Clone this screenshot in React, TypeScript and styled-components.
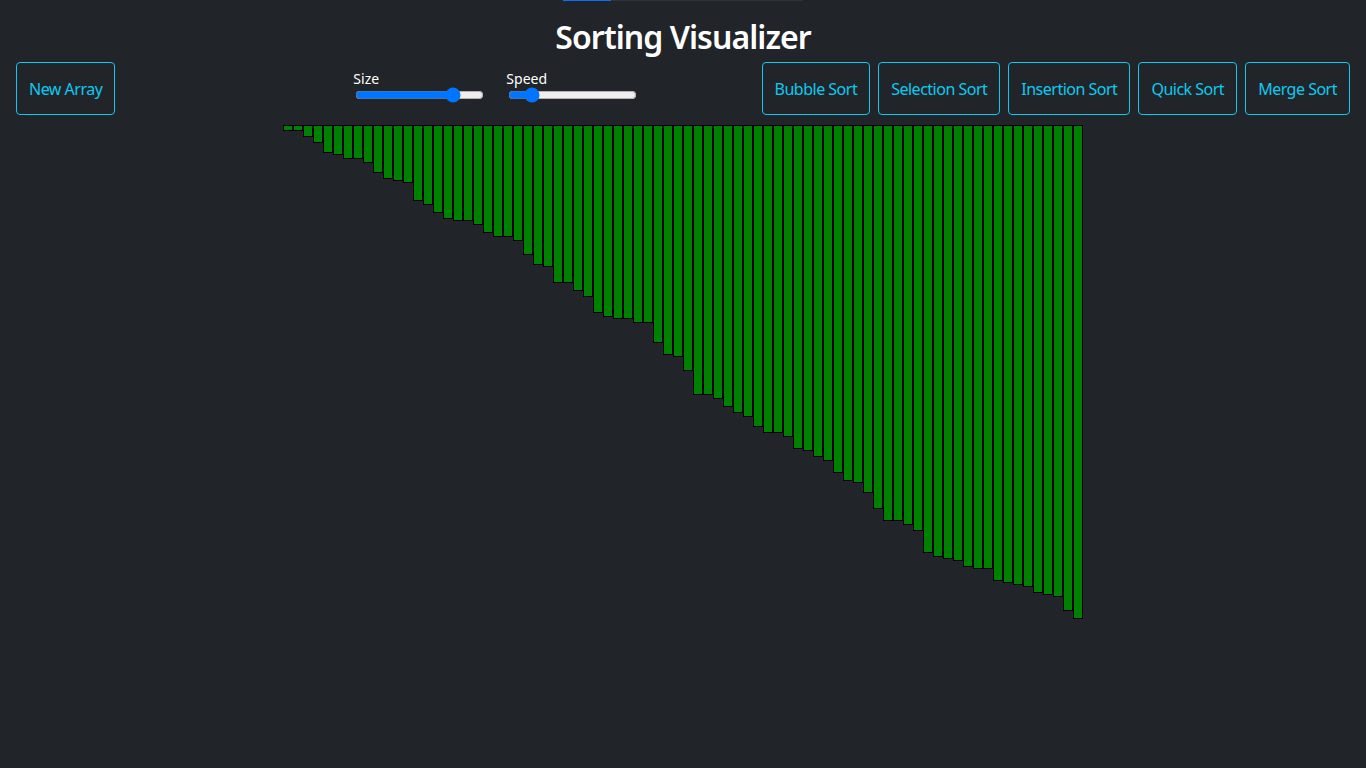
import React, { useState } from "react";
import styled, { createGlobalStyle } from "styled-components";

const GlobalStyle = createGlobalStyle`
  html, body {
    margin: 0;
    padding: 0;
    background: #212529;
    color: #ffffff;
    font-family: "Noto Sans", "Open Sans", "DejaVu Sans", sans-serif;
  }
  * { box-sizing: border-box; }
`;

const Page = styled.div`
  min-height: 768px;
  background: #212529;
  display: flex;
  flex-direction: column;
  align-items: stretch;
`;

const ProgressTrack = styled.div`
  align-self: center;
  width: 240px;
  height: 1px;
  background: #2f3338;
  display: flex;
`;

const ProgressFill = styled.div`
  height: 100%;
  background: #0d6efd;
`;

const Title = styled.h2`
  margin: 17px 0 0;
  text-align: center;
  font-size: 32px;
  font-weight: 600;
  letter-spacing: -0.95px;
  line-height: 38px;
  color: #ffffff;
`;

const Toolbar = styled.div`
  display: flex;
  align-items: stretch;
  justify-content: space-between;
  padding: 0 16px;
  margin-top: 6px;
  height: 53px;
`;

const LeftGroup = styled.div`
  display: flex;
  align-items: stretch;
`;

const SliderArea = styled.div`
  display: flex;
  gap: 20px;
  margin-left: 238px;
  padding-top: 9px;
`;

const SliderField = styled.label`
  display: flex;
  flex-direction: column;
  font-size: 14px;
  line-height: 16px;
  color: #ffffff;
`;

const Range = styled.input`
  width: 129px;
  margin: 0 2px;
  accent-color: #0075ff;
`;

const ButtonRow = styled.div`
  display: flex;
  gap: 8px;
  align-items: stretch;
`;

const OutlineButton = styled.button`
  font-family: inherit;
  font-size: 16px;
  letter-spacing: -0.5px;
  line-height: 24px;
  padding: 0 12px;
  color: #0dcaf0;
  background: transparent;
  border: 1px solid #0dcaf0;
  border-radius: 4px;
  cursor: pointer;
  &:hover {
    background: #0dcaf0;
    color: #000;
  }
`;

const BarArea = styled.div`
  display: flex;
  justify-content: center;
  align-items: flex-start;
  margin-top: 10px;
`;

const Bar = styled.div`
  width: 10px;
  background: #008000;
  border: 1px solid #000000;
`;

const bottoms = [
  130, 130, 136, 142, 152, 154, 158, 158, 162, 172, 178, 180, 182, 200, 204, 212, 218, 220, 220, 224,
  232, 236, 236, 240, 254, 264, 266, 282, 282, 290, 296, 312, 316, 318, 318, 322, 322, 342, 354, 356,
  370, 394, 394, 398, 406, 412, 416, 426, 432, 432, 436, 448, 450, 456, 460, 472, 480, 482, 492, 508,
  520, 520, 524, 530, 552, 556, 558, 560, 566, 568, 568, 580, 582, 584, 586, 592, 594, 596, 610, 618,
];

const sorts = ["Bubble Sort", "Selection Sort", "Insertion Sort", "Quick Sort", "Merge Sort"];

export default function App() {
  const [size, setSize] = useState(80);
  const [speed, setSpeed] = useState(15);
  return (
    <Page>
      <GlobalStyle />
      <ProgressTrack>
        <ProgressFill style={{ width: "20%" }} />
      </ProgressTrack>
      <Title>Sorting Visualizer</Title>
      <Toolbar>
        <LeftGroup>
          <OutlineButton>New Array</OutlineButton>
          <SliderArea>
            <SliderField>
              Size
              <Range type="range" min={5} max={100} value={size} onChange={(e) => setSize(+e.target.value)} />
            </SliderField>
            <SliderField>
              Speed
              <Range type="range" min={1} max={100} value={speed} onChange={(e) => setSpeed(+e.target.value)} />
            </SliderField>
          </SliderArea>
        </LeftGroup>
        <ButtonRow>
          {sorts.map((s) => (
            <OutlineButton key={s}>{s}</OutlineButton>
          ))}
        </ButtonRow>
      </Toolbar>
      <BarArea>
        {bottoms.map((b, i) => (
          <Bar key={i} style={{ height: b - 124 }} />
        ))}
      </BarArea>
    </Page>
  );
}
